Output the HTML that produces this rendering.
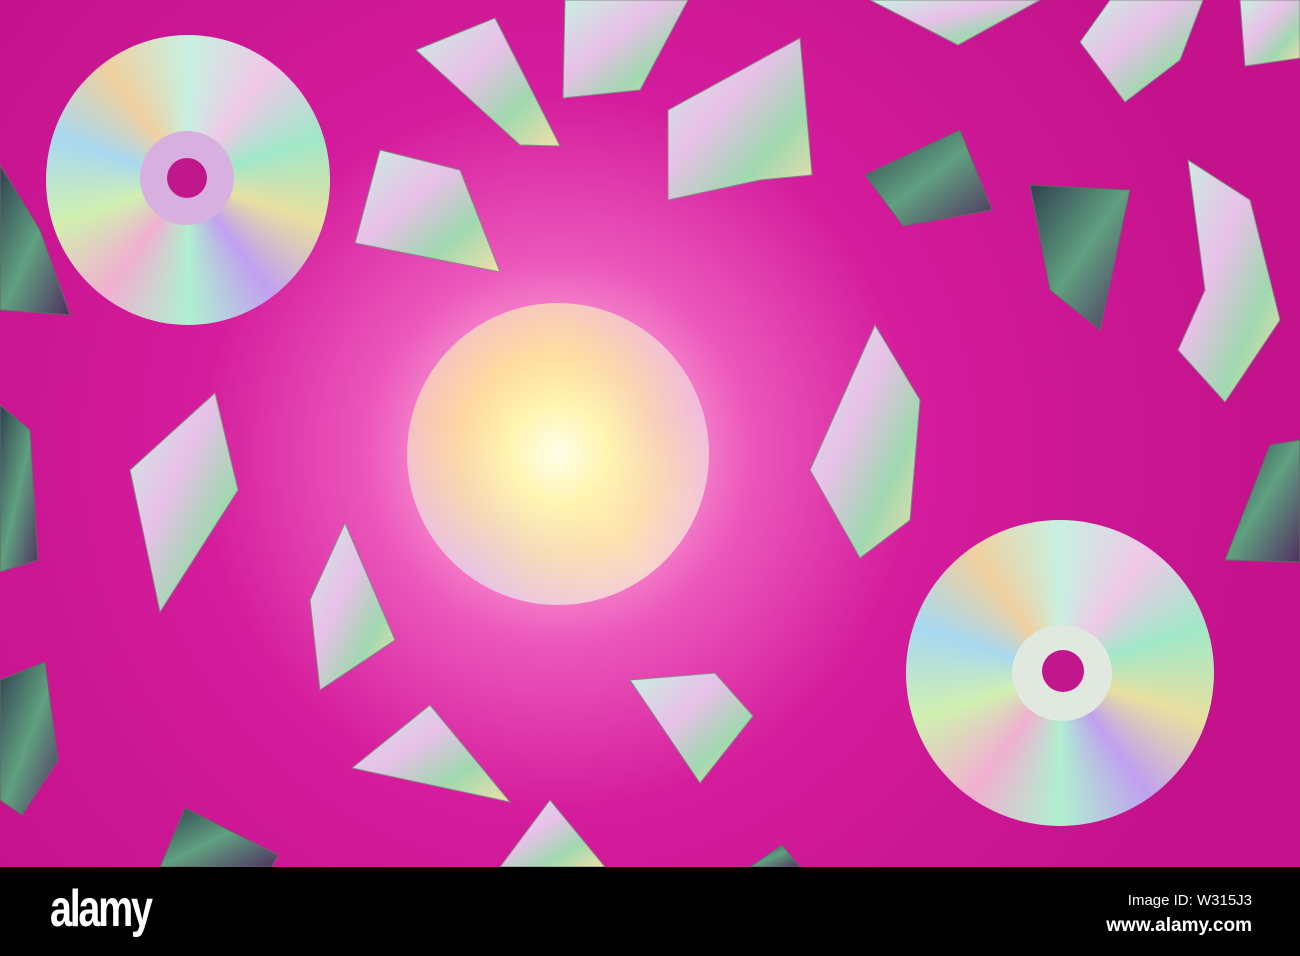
<!DOCTYPE html>
<html><head><meta charset="utf-8"><style>
html,body{margin:0;padding:0}
body{width:1300px;height:956px;position:relative;overflow:hidden;background:#000;font-family:"Liberation Sans",sans-serif}
#photo{position:absolute;left:0;top:0;width:1300px;height:867px;overflow:hidden;
background:radial-gradient(circle at 558px 452px,#fff8e0 0,#ffb8dc 70px,#ec58bc 190px,#d41c9c 360px,#c4128c 700px)}
.disc{position:absolute;border-radius:50%;
background:conic-gradient(#c8f0e0,#f0c8e8,#a0e8c8,#e8e0a0,#c0a0f0,#b0f0d0,#f0b0d0,#d0f0b0,#a8d8f0,#f0d0a0,#c8f0e0)}
.hole{position:absolute;border-radius:50%;background:#d8b0e0}
.hole2{position:absolute;border-radius:50%;background:#c0188c}
svg{position:absolute;left:0;top:0}
.foot{position:absolute;left:0;top:867px;width:1300px;height:89px;background:#000;color:#fff}
</style></head><body>
<div id="photo">
<div class="disc" style="left:46px;top:35px;width:284px;height:290px"></div>
<div class="hole" style="left:140px;top:131px;width:94px;height:94px"></div>
<div class="hole2" style="left:167px;top:158px;width:40px;height:40px"></div>
<div class="disc" style="left:906px;top:520px;width:308px;height:306px"></div>
<div class="hole" style="left:1012px;top:625px;width:100px;height:96px;background:#e0e8e0"></div>
<div class="hole2" style="left:1042px;top:650px;width:42px;height:42px"></div>
<div class="disc" style="left:407px;top:303px;width:302px;height:302px;background:radial-gradient(circle,#ffffe8 0,#fff4b0 50px,rgba(255,220,160,.6) 100px,rgba(240,180,220,.5) 150px),conic-gradient(#ffe0a0,#f0c0e0,#fff0c0,#e0d0f0,#ffd0a0,#ffe0a0)"></div>
<svg width="1300" height="867">
<defs><linearGradient id="g" x1="0" y1="0" x2="1" y2="1"><stop offset="0" stop-color="#c8f0e0"/><stop offset=".4" stop-color="#e8c0e8"/><stop offset=".7" stop-color="#a0d8b0"/><stop offset="1" stop-color="#f0e0a8"/></linearGradient>
<linearGradient id="d" x1="0" y1="0" x2="1" y2="1"><stop offset="0" stop-color="#304050"/><stop offset=".5" stop-color="#60a080"/><stop offset="1" stop-color="#503060"/></linearGradient></defs>
<g fill="url(#g)" stroke="#888" stroke-width="1">
<polygon points="416,50 495,18 560,146 520,145"/>
<polygon points="565,0 688,0 640,90 563,98"/>
<polygon points="668,200 668,110 800,38 812,175 760,180"/>
<polygon points="380,150 460,170 500,272 355,243"/>
<polygon points="1080,42 1110,0 1203,0 1180,60 1125,102"/>
<polygon points="1240,0 1300,0 1300,58 1245,66"/>
<polygon points="870,0 1040,0 958,45"/>
<polygon points="1188,160 1250,200 1280,320 1225,402 1178,350 1205,290"/>
<polygon points="875,325 920,400 910,520 860,558 810,470"/>
<polygon points="130,470 215,393 238,490 160,612"/>
<polygon points="345,523 395,640 320,690 310,600"/>
<polygon points="630,680 715,673 753,716 700,783"/>
<polygon points="430,705 510,802 352,768"/>
<polygon points="500,867 550,800 605,867"/>
</g>
<g fill="url(#d)" stroke="#666">
<polygon points="865,175 960,130 992,210 903,226"/>
<polygon points="1030,185 1130,190 1100,330 1050,290"/>
<polygon points="0,165 40,230 70,315 0,310"/>
<polygon points="0,405 30,430 38,560 0,572"/>
<polygon points="0,680 45,662 58,760 22,815 0,800"/>
<polygon points="160,867 185,808 278,855 272,867"/>
<polygon points="1225,560 1270,445 1300,440 1300,562"/>
<polygon points="750,867 782,845 800,867"/>
</g>
</svg>
</div>
<div class="foot">
<div style="position:absolute;left:50px;top:12px;font-size:52px;font-weight:bold;letter-spacing:-3px;transform:scaleX(.76);transform-origin:left">alamy</div>
<div style="position:absolute;right:48px;top:25px;font-size:15px;text-align:right">Image ID: W315J3</div>
<div style="position:absolute;right:48px;top:48px;font-size:19px;font-weight:bold;text-align:right">www.alamy.com</div>
</div>
</body></html>
